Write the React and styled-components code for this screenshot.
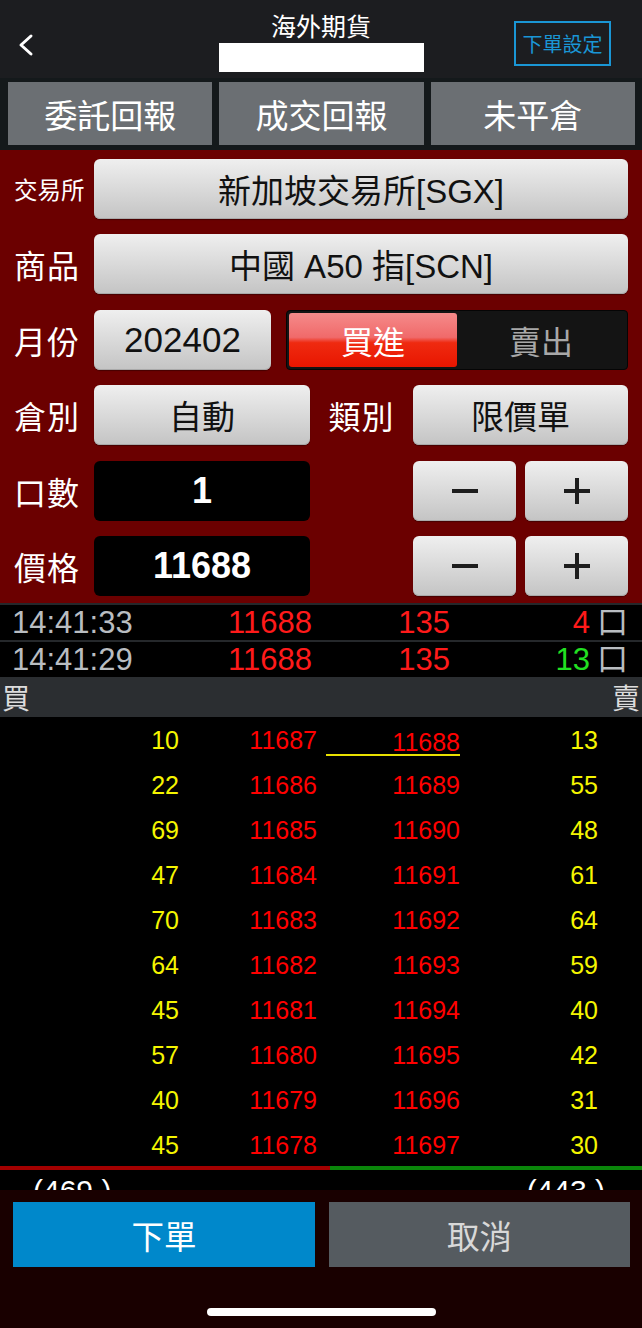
import React from "react";
import styled, { createGlobalStyle } from "styled-components";

const GlobalStyle = createGlobalStyle`
  html, body {
    margin: 0;
    padding: 0;
    background: #000;
  }
  body {
    font-family: "Liberation Sans", "Noto Sans CJK TC", sans-serif;
  }
  * { box-sizing: border-box; }
`;

const Page = styled.div`
  width: 642px;
  height: 1328px;
  display: flex;
  flex-direction: column;
  background: #000;
  overflow: hidden;
`;

// ---------- header ----------
const Header = styled.div`
  height: 78px;
  background: #1c1d20;
  display: grid;
  grid-template-columns: 1fr auto 1fr;
  align-items: start;
`;
const Back = styled.div`
  padding: 33px 0 0 18px;
  display: flex;
`;
const TitleBox = styled.div`
  display: flex;
  flex-direction: column;
  align-items: center;
  padding-top: 11px;
`;
const Title = styled.div`
  color: #fff;
  font-size: 25px;
  line-height: 32px;
  height: 32px;
`;
const Masked = styled.div`
  width: 205px;
  height: 29px;
  background: #fff;
`;
const HeaderRight = styled.div`
  display: flex;
  justify-content: flex-end;
  padding: 21px 31px 0 0;
`;
const SettingButton = styled.div`
  width: 97px;
  height: 45px;
  border: 2px solid #1a96d5;
  color: #1a96d5;
  font-size: 20px;
  display: flex;
  align-items: center;
  justify-content: center;
`;

// ---------- tabs ----------
const Tabs = styled.div`
  height: 72px;
  background: #14191b;
  display: grid;
  grid-template-columns: repeat(3, 1fr);
  gap: 7px;
  padding: 4px 7px 5px 8px;
`;
const Tab = styled.div`
  background: #6b6f73;
  color: #fff;
  font-size: 33px;
  display: flex;
  align-items: center;
  justify-content: center;
`;

// ---------- form ----------
const Form = styled.div`
  height: 453px;
  background: #6b0000;
  padding: 9px 14px 7px 14px;
  display: flex;
  flex-direction: column;
  gap: 15.4px;
`;
const Row = styled.div`
  height: 60px;
  display: flex;
  align-items: stretch;
`;
const Label = styled.div`
  width: ${(p) => p.$w || 80}px;
  color: #fff;
  font-size: ${(p) => (p.$small ? 23.5 : 32)}px;
  display: flex;
  align-items: center;
  justify-content: ${(p) => (p.$center ? "center" : "flex-start")};
  flex-shrink: 0;
  letter-spacing: ${(p) => (p.$small ? 0 : 1)}px;
`;
const GrayButton = styled.div`
  width: ${(p) => (p.$w ? `${p.$w}px` : "auto")};
  flex: ${(p) => (p.$w ? "0 0 auto" : "1")};
  background: linear-gradient(#efefef, #c4c4c4);
  border-radius: 6px;
  box-shadow: inset 0 -1px 0 #a9a9a9, 0 1px 1px rgba(0, 0, 0, 0.35);
  color: #111;
  font-size: ${(p) => p.$size || 33}px;
  display: flex;
  align-items: center;
  justify-content: center;
`;
const BlackBox = styled.div`
  width: 216px;
  background: #000;
  border-radius: 6px;
  color: #fff;
  font-size: 36px;
  font-weight: bold;
  display: flex;
  align-items: center;
  justify-content: center;
`;
const Spacer = styled.div`
  flex: 1;
`;
const StepGroup = styled.div`
  width: 215px;
  display: grid;
  grid-template-columns: 1fr 1fr;
  gap: 9px;
`;
const Toggle = styled.div`
  margin-left: 15px;
  flex: 1;
  background: #141414;
  border: 1px solid #050505;
  border-radius: 4px;
  padding: 2px;
  display: grid;
  grid-template-columns: 168px 1fr;
`;
const ToggleItem = styled.div`
  font-size: 32px;
  display: flex;
  align-items: center;
  justify-content: center;
  border-radius: 3px;
  color: ${(p) => (p.$active ? "#fff" : "#a8a8a8")};
  background: ${(p) =>
    p.$active
      ? "linear-gradient(#f58a8a 0%, #f06a6a 45%, #ef2a10 55%, #e81600 100%)"
      : "transparent"};
`;

// ---------- ticks ----------
const Ticks = styled.div`
  display: flex;
  flex-direction: column;
`;
const TickRow = styled.div`
  height: 37px;
  border-top: 2px solid #25282b;
  display: grid;
  grid-template-columns: 200px 100px 138px 140px 38px;
  padding-left: 12px;
  align-items: center;
  font-size: 31px;
  line-height: 35px;
`;
const Cell = styled.div`
  color: ${(p) => p.$color || "#fff"};
  text-align: ${(p) => p.$align || "right"};
`;

const SideBar = styled.div`
  height: 40px;
  background: #2b2e31;
  color: #dcdcdc;
  font-size: 28px;
  display: flex;
  justify-content: space-between;
  align-items: center;
  padding: 0 2px;
`;

// ---------- order book ----------
const Book = styled.div`
  height: 449px;
  padding-top: 1px;
  display: flex;
  flex-direction: column;
`;
const BookRow = styled.div`
  height: 45px;
  flex: none;
  display: grid;
  grid-template-columns: 179px 138px 143px 138px;
  align-items: center;
  font-size: 25px;
`;
const Qty = styled.div`
  color: #f5f500;
  text-align: right;
`;
const Price = styled.div`
  color: #ff0000;
  text-align: right;
`;
const Marked = styled.div`
  margin-left: 9px;
  text-align: right;
  color: #ff0000;
  border-bottom: 2px solid #e8e000;
  line-height: 24px;
  margin-top: 4px;
`;

const Balance = styled.div`
  position: relative;
  height: 4px;
  display: grid;
  grid-template-columns: 330px 1fr;
`;
const BalancePart = styled.div`
  background: ${(p) => p.$color};
`;
const Totals = styled.div`
  height: 20px;
  overflow: hidden;
  display: flex;
  justify-content: space-between;
  color: #fff;
  font-size: 30px;
  line-height: 30px;
  padding: 6px 37px 0 33px;
`;

// ---------- bottom ----------
const Bottom = styled.div`
  flex: 1;
  background: #190000;
  padding: 12px 12px 0 13px;
  display: flex;
  flex-direction: column;
  align-items: center;
`;
const Actions = styled.div`
  width: 100%;
  height: 65px;
  display: grid;
  grid-template-columns: 302px 301px;
  gap: 14px;
`;
const Action = styled.div`
  background: ${(p) => p.$bg};
  color: ${(p) => p.$color};
  font-size: 32.5px;
  display: flex;
  align-items: center;
  justify-content: center;
`;
const HomeIndicator = styled.div`
  margin-top: 41px;
  width: 229px;
  height: 8px;
  border-radius: 4px;
  background: #fff;
`;

const Chevron = () => (
  <svg width="16" height="24" viewBox="0 0 16 24">
    <polyline points="13,3 3,12 13,21" fill="none" stroke="#fff" strokeWidth="3" strokeLinecap="round" strokeLinejoin="round" />
  </svg>
);

const Minus = () => (
  <svg width="30" height="30" viewBox="0 0 30 30">
    <line x1="2" y1="15" x2="28" y2="15" stroke="#1d1d1d" strokeWidth="4" />
  </svg>
);

const Plus = () => (
  <svg width="30" height="30" viewBox="0 0 30 30">
    <line x1="2" y1="15" x2="28" y2="15" stroke="#1d1d1d" strokeWidth="4" />
    <line x1="15" y1="2" x2="15" y2="28" stroke="#1d1d1d" strokeWidth="4" />
  </svg>
);

const ticks = [
  { time: "14:41:33", price: "11688", vol: "135", qty: "4", qtyColor: "#ff1a1a" },
  { time: "14:41:29", price: "11688", vol: "135", qty: "13", qtyColor: "#22e022" },
];

const book = [
  [10, 11687, 11688, 13],
  [22, 11686, 11689, 55],
  [69, 11685, 11690, 48],
  [47, 11684, 11691, 61],
  [70, 11683, 11692, 64],
  [64, 11682, 11693, 59],
  [45, 11681, 11694, 40],
  [57, 11680, 11695, 42],
  [40, 11679, 11696, 31],
  [45, 11678, 11697, 30],
];

export default function App() {
  return (
    <Page>
      <GlobalStyle />
      <Header>
        <Back>
          <Chevron />
        </Back>
        <TitleBox>
          <Title>海外期貨</Title>
          <Masked />
        </TitleBox>
        <HeaderRight>
          <SettingButton>下單設定</SettingButton>
        </HeaderRight>
      </Header>

      <Tabs>
        <Tab>委託回報</Tab>
        <Tab>成交回報</Tab>
        <Tab>未平倉</Tab>
      </Tabs>

      <Form>
        <Row>
          <Label $small>交易所</Label>
          <GrayButton>新加坡交易所[SGX]</GrayButton>
        </Row>
        <Row>
          <Label>商品</Label>
          <GrayButton>中國 A50 指[SCN]</GrayButton>
        </Row>
        <Row>
          <Label>月份</Label>
          <GrayButton $w={177} $size={35}>202402</GrayButton>
          <Toggle>
            <ToggleItem $active>買進</ToggleItem>
            <ToggleItem>賣出</ToggleItem>
          </Toggle>
        </Row>
        <Row>
          <Label>倉別</Label>
          <GrayButton $w={216}>自動</GrayButton>
          <Label $w={103} $center>類別</Label>
          <GrayButton $w={215}>限價單</GrayButton>
        </Row>
        <Row>
          <Label>口數</Label>
          <BlackBox>1</BlackBox>
          <Spacer />
          <StepGroup>
            <GrayButton><Minus /></GrayButton>
            <GrayButton><Plus /></GrayButton>
          </StepGroup>
        </Row>
        <Row>
          <Label>價格</Label>
          <BlackBox>11688</BlackBox>
          <Spacer />
          <StepGroup>
            <GrayButton><Minus /></GrayButton>
            <GrayButton><Plus /></GrayButton>
          </StepGroup>
        </Row>
      </Form>

      <Ticks>
        {ticks.map((t) => (
          <TickRow key={t.time}>
            <Cell $color="#b9bdc1" $align="left">{t.time}</Cell>
            <Cell $color="#ff1a1a">{t.price}</Cell>
            <Cell $color="#ff1a1a">{t.vol}</Cell>
            <Cell $color={t.qtyColor}>{t.qty}</Cell>
            <Cell $color="#b9bdc1">口</Cell>
          </TickRow>
        ))}
      </Ticks>

      <SideBar>
        <span>買</span>
        <span>賣</span>
      </SideBar>

      <Book>
        {book.map(([bq, bp, ap, aq], i) => (
          <BookRow key={bp}>
            <Qty>{bq}</Qty>
            <Price>{bp}</Price>
            {i === 0 ? <Marked>{ap}</Marked> : <Price>{ap}</Price>}
            <Qty>{aq}</Qty>
          </BookRow>
        ))}
      </Book>

      <Balance>
        <BalancePart $color="#a30000" />
        <BalancePart $color="#0a860a" />
      </Balance>
      <Totals>
        <span>(469 )</span>
        <span>(443 )</span>
      </Totals>

      <Bottom>
        <Actions>
          <Action $bg="#0088cb" $color="#fff">下單</Action>
          <Action $bg="#555b60" $color="#d8d8d8">取消</Action>
        </Actions>
        <HomeIndicator />
      </Bottom>
    </Page>
  );
}
